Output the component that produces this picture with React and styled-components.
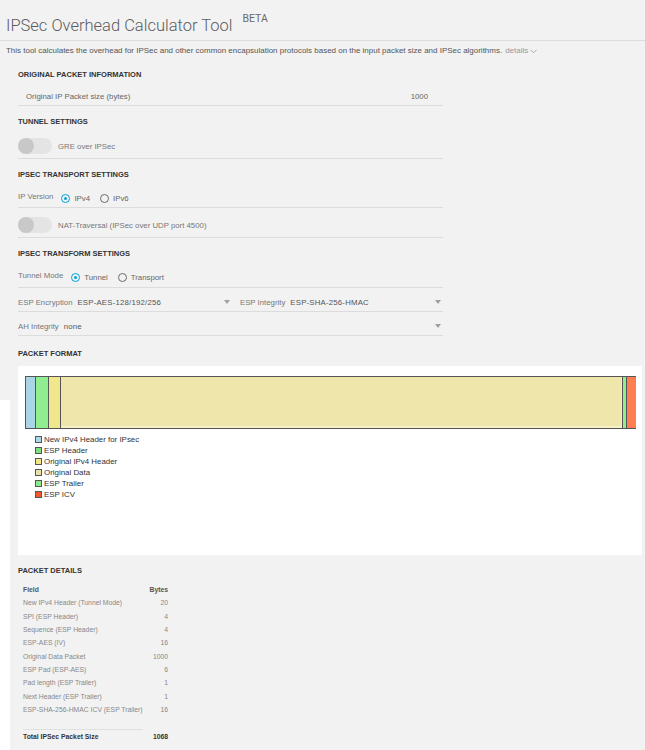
import React from "react";
import styled, { createGlobalStyle } from "styled-components";

const Global = createGlobalStyle`
  html, body { margin: 0; padding: 0; }
  body {
    background-color: #f2f2f2;
    background-image: linear-gradient(#ffffff, #ffffff);
    background-repeat: no-repeat;
    background-position: 0 400px;
    background-size: 10px 100%;
    font-family: "Liberation Sans", Arial, sans-serif;
    color: #666;
    min-height: 750px;
  }
`;

const Page = styled.div`
  width: 645px;
  min-height: 750px;
  display: flex;
  flex-direction: column;
`;

const Header = styled.header`
  height: 40px;
  border-bottom: 1px solid #dcdcdc;
  display: flex;
  align-items: flex-start;
  padding-left: 6px;
  box-sizing: content-box;
`;

const Title = styled.h1`
  margin: 17px 0 0 0;
  font-family: Roboto, "Liberation Sans", sans-serif;
  font-weight: 300;
  font-size: 16.5px;
  line-height: 17px;
  color: #5c5c5f;
  white-space: nowrap;
`;

const Beta = styled.span`
  margin: 14px 0 0 10px;
  font-family: Roboto, "Liberation Sans", sans-serif;
  font-weight: 400;
  font-size: 10.5px;
  line-height: 10.5px;
  color: #6a6a6a;
`;

const Description = styled.p`
  margin: 0 0 2px 0;
  height: 20px;
  line-height: 20px;
  padding-left: 6px;
  font-size: 7.98px;
  color: #555;
  white-space: nowrap;
  display: flex;
  align-items: center;
`;

const Details = styled.span`
  color: #999;
  margin-left: 3px;
  display: inline-flex;
  align-items: center;
  gap: 2px;
`;

const Content = styled.main`
  padding-left: 18px;
  display: flex;
  flex-direction: column;
`;

const SectionTitle = styled.h2`
  margin: ${(p) => (p.$first ? "0" : p.$gap || "4px")} 0 0 0;
  height: 24px;
  line-height: 24px;
  font-size: 7.5px;
  font-weight: 700;
  color: #333;
  white-space: nowrap;
`;

const Form = styled.div`
  width: 425px;
  display: flex;
  flex-direction: column;
`;

const InputRow = styled.div`
  height: 18px;
  border-bottom: 1px solid #dcdcdc;
  display: flex;
  align-items: center;
  justify-content: space-between;
  padding: 0 15px 0 8px;
  font-size: 7.8px;
  color: #666;
`;

const ToggleRow = styled.div`
  border-bottom: 1px solid #dcdcdc;
  display: flex;
  align-items: center;
  gap: 6px;
  padding: ${(p) => p.$top || 4}px 0 4px 0;
  font-size: 7.8px;
  color: #777;
`;

const Track = styled.span`
  width: 34px;
  height: 16px;
  border-radius: 8px;
  background: #e4e4e4;
  display: flex;
  align-items: center;
`;

const Knob = styled.span`
  width: 16px;
  height: 16px;
  border-radius: 50%;
  background: #c8c8c8;
`;

const RadioRow = styled.div`
  height: ${(p) => p.$h}px;
  border-bottom: 1px solid #dcdcdc;
  display: flex;
  align-items: center;
  font-size: 7.8px;
  color: #777;
`;

const RowLabel = styled.span`
  margin-bottom: ${(p) => p.$up}px;
  margin-right: 8px;
`;

const RadioGroup = styled.span`
  display: flex;
  align-items: center;
  gap: 10px;
  margin-top: ${(p) => p.$down}px;
`;

const RadioOption = styled.span`
  display: flex;
  align-items: center;
  gap: 4px;
  color: #666;
`;

const RadioCircle = styled.span`
  width: 9px;
  height: 9px;
  box-sizing: border-box;
  border-radius: 50%;
  border: ${(p) => (p.$on ? "1.3px solid #049fd9" : "1px solid #6b6b6b")};
  display: flex;
  align-items: center;
  justify-content: center;
  &::after {
    content: "";
    width: 3px;
    height: 3px;
    border-radius: 50%;
    background: ${(p) => (p.$on ? "#049fd9" : "transparent")};
  }
`;

const SelectRow = styled.div`
  height: 18px;
  padding-top: 5px;
  border-bottom: 1px solid #dcdcdc;
  display: flex;
  gap: 8px;
  font-size: 7.8px;
`;

const Select = styled.div`
  flex: ${(p) => p.$flex || 1};
  display: flex;
  align-items: center;
  padding-right: 2px;
`;

const SelectLabel = styled.span`
  color: #777;
  margin-right: 5px;
  white-space: nowrap;
`;

const SelectValue = styled.span`
  flex: 1;
  color: #555;
  letter-spacing: 0.2px;
  white-space: nowrap;
`;

const Caret = styled.span`
  width: 0;
  height: 0;
  border-left: 3px solid transparent;
  border-right: 3px solid transparent;
  border-top: 4px solid #a0a0a0;
`;

const ChartPanel = styled.section`
  width: 624px;
  height: 189px;
  background: #fff;
  padding: 10px 6px 0 7px;
  box-sizing: border-box;
  display: flex;
  flex-direction: column;
`;

const Bar = styled.div`
  height: 53px;
  border: 1px solid #555;
  display: flex;
  box-sizing: border-box;
`;

const Segment = styled.div`
  width: ${(p) => p.$w}px;
  flex: none;
  background: ${(p) => p.$c};
  & + & { border-left: 1px solid #555; }
  box-shadow: ${(p) => (p.$inner ? "inset -1px -2px 0 #f6f1c6" : "none")};
`;

const Legend = styled.ul`
  list-style: none;
  margin: 5px 0 0 10px;
  padding: 0;
  display: flex;
  flex-direction: column;
`;

const LegendItem = styled.li`
  display: flex;
  align-items: center;
  gap: 2px;
  height: 11px;
  font-size: 7.9px;
  color: #333;
`;

const Swatch = styled.span`
  width: 7px;
  height: 7px;
  box-sizing: border-box;
  border: 1px solid #555;
  background: ${(p) => p.$c};
`;

const Table = styled.div`
  margin-left: 5px;
  width: 145px;
  display: grid;
  grid-template-columns: 1fr auto;
  grid-auto-rows: 13.33px;
  align-items: center;
  font-size: 6.8px;
  color: #888;
  white-space: nowrap;
`;

const HeadCell = styled.span`
  font-weight: 700;
  color: #555;
  text-align: ${(p) => (p.$right ? "right" : "left")};
`;

const Cell = styled.span`
  text-align: ${(p) => (p.$right ? "right" : "left")};
`;

const Separator = styled.div`
  grid-column: 1 / 2;
  width: 120px;
  height: 1px;
  background: #e0e0e0;
  align-self: end;
`;

const TotalCell = styled.span`
  font-weight: 700;
  color: #333;
  text-align: ${(p) => (p.$right ? "right" : "left")};
`;

const segments = [
  { w: 9, c: "#a9d5e5" },
  { w: 12, c: "#90ee90" },
  { w: 11, c: "#f0e68c" },
  { w: 561, c: "#eee6aa", inner: true },
  { w: 3, c: "#90ee90" },
  { w: 9, c: "#ff7f50" },
];

const legend = [
  ["New IPv4 Header for IPsec", "#add8e6"],
  ["ESP Header", "#7ee07e"],
  ["Original IPv4 Header", "#f0e68c"],
  ["Original Data", "#e8e2a8"],
  ["ESP Trailer", "#8ee88e"],
  ["ESP ICV", "#f2572f"],
];

const rows = [
  ["New IPv4 Header (Tunnel Mode)", "20"],
  ["SPI (ESP Header)", "4"],
  ["Sequence (ESP Header)", "4"],
  ["ESP-AES (IV)", "16"],
  ["Original Data Packet", "1000"],
  ["ESP Pad (ESP-AES)", "6"],
  ["Pad length (ESP Trailer)", "1"],
  ["Next Header (ESP Trailer)", "1"],
  ["ESP-SHA-256-HMAC ICV (ESP Trailer)", "16"],
];

function Toggle() {
  return (
    <Track>
      <Knob />
    </Track>
  );
}

function Radio({ on, children }) {
  return (
    <RadioOption>
      <RadioCircle $on={on} />
      {children}
    </RadioOption>
  );
}

export default function App() {
  return (
    <>
      <Global />
      <Page>
        <Header>
          <Title>IPSec Overhead Calculator Tool</Title>
          <Beta>BETA</Beta>
        </Header>
        <Description>
          This tool calculates the overhead for IPSec and other common encapsulation protocols based on the input packet size and IPSec algorithms.
          <Details>
            details
            <svg width="7" height="5" viewBox="0 0 7 5">
              <polyline points="0.5,0.8 3.5,3.8 6.5,0.8" fill="none" stroke="#999" strokeWidth="0.8" />
            </svg>
          </Details>
        </Description>
        <Content>
          <Form>
            <SectionTitle $first>ORIGINAL PACKET INFORMATION</SectionTitle>
            <InputRow>
              <span>Original IP Packet size (bytes)</span>
              <span>1000</span>
            </InputRow>

            <SectionTitle>TUNNEL SETTINGS</SectionTitle>
            <ToggleRow>
              <Toggle />
              GRE over IPSec
            </ToggleRow>

            <SectionTitle>IPSEC TRANSPORT SETTINGS</SectionTitle>
            <RadioRow $h={20}>
              <RowLabel $up={2}>IP Version</RowLabel>
              <RadioGroup $down={2}>
                <Radio on>IPv4</Radio>
                <Radio>IPv6</Radio>
              </RadioGroup>
            </RadioRow>
            <ToggleRow $top={9}>
              <Toggle />
              NAT-Traversal (IPSec over UDP port 4500)
            </ToggleRow>

            <SectionTitle>IPSEC TRANSFORM SETTINGS</SectionTitle>
            <RadioRow $h={21}>
              <RowLabel $up={3}>Tunnel Mode</RowLabel>
              <RadioGroup $down={1}>
                <Radio on>Tunnel</Radio>
                <Radio>Transport</Radio>
              </RadioGroup>
            </RadioRow>
            <SelectRow>
              <Select $flex={214}>
                <SelectLabel>ESP Encryption</SelectLabel>
                <SelectValue>ESP-AES-128/192/256</SelectValue>
                <Caret />
              </Select>
              <Select $flex={203}>
                <SelectLabel>ESP Integrity</SelectLabel>
                <SelectValue>ESP-SHA-256-HMAC</SelectValue>
                <Caret />
              </Select>
            </SelectRow>
            <SelectRow>
              <Select>
                <SelectLabel>AH Integrity</SelectLabel>
                <SelectValue>none</SelectValue>
                <Caret />
              </Select>
            </SelectRow>

            <SectionTitle $gap="6px">PACKET FORMAT</SectionTitle>
          </Form>

          <ChartPanel>
            <Bar>
              {segments.map((s, i) => (
                <Segment key={i} $w={s.w} $c={s.c} $inner={s.inner} />
              ))}
            </Bar>
            <Legend>
              {legend.map(([label, c]) => (
                <LegendItem key={label}>
                  <Swatch $c={c} />
                  {label}
                </LegendItem>
              ))}
            </Legend>
          </ChartPanel>

          <SectionTitle>PACKET DETAILS</SectionTitle>
          <Table>
            <HeadCell>Field</HeadCell>
            <HeadCell $right>Bytes</HeadCell>
            {rows.map(([f, b]) => (
              <React.Fragment key={f}>
                <Cell>{f}</Cell>
                <Cell $right>{b}</Cell>
              </React.Fragment>
            ))}
            <Separator />
            <span />
            <TotalCell>Total IPSec Packet Size</TotalCell>
            <TotalCell $right>1068</TotalCell>
          </Table>
        </Content>
      </Page>
    </>
  );
}
